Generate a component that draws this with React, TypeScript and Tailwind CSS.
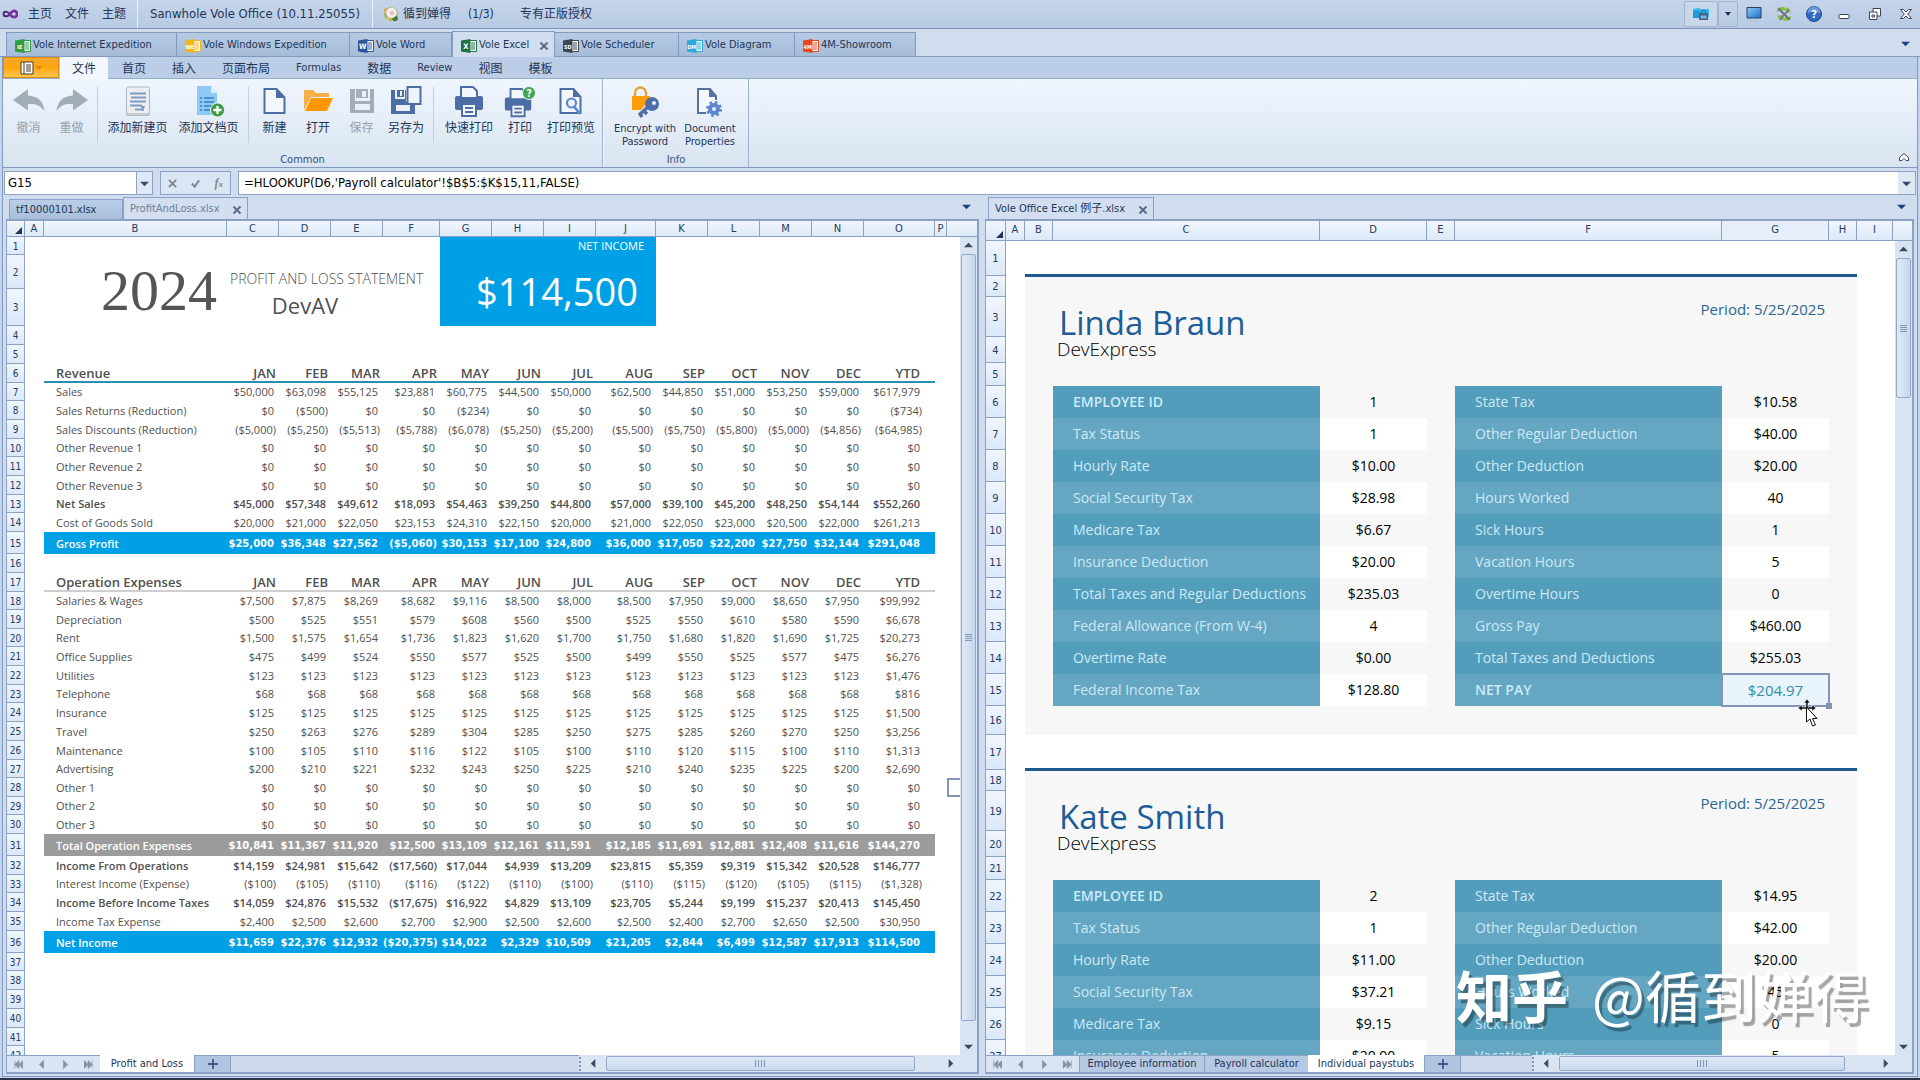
import { ReactNode } from 'react'
import clsx from 'clsx'

const UI_FONT = "font-['DejaVu_Sans_Condensed','DejaVu_Sans','Noto_Sans_CJK_SC',sans-serif]"
const CELL_FONT = "font-['Open_Sans','Noto_Sans_CJK_SC',sans-serif]"

const HEAD_BG = 'bg-linear-to-b from-[#f0f6fd] to-[#dbe8f8]'
const THUMB_V = 'bg-linear-to-r from-[#e0eaf6] to-[#c5d7ec]'
const THUMB_H = 'bg-linear-to-b from-[#dfe9f6] to-[#c8d9ed]'

const APP_TABS = [
  { name: 'Vole Internet Expedition', mark: 'IE', color: '#2f9e44', width: 'w-[171px]' },
  { name: 'Vole Windows Expedition', mark: 'WE', color: '#f2b31b', width: 'w-[173px]' },
  { name: 'Vole Word', mark: 'W', color: '#2b579a', width: 'w-[102px]' },
  { name: 'Vole Excel', mark: 'X', color: '#1f7244', width: 'w-[103px]', active: true },
  { name: 'Vole Scheduler', mark: 'SD', color: '#3b4654', width: 'w-[124px]' },
  { name: 'Vole Diagram', mark: 'DM', color: '#2aa9dc', width: 'w-[116px]' },
  { name: '4M-Showroom', mark: '4M', color: '#e8481f', width: 'w-[121px]' },
]

const RIBBON_TABS = ['首页', '插入', '页面布局', 'Formulas', '数据', 'Review', '视图', '模板']

type Kind = 'head' | 'line' | 'normal' | 'bold' | 'blue' | 'gray'
type PnlRow = [Kind, string, string]

const MONTHS = 'JAN FEB MAR APR MAY JUN JUL AUG SEP OCT NOV DEC YTD'
const ZEROS = '$0 $0 $0 $0 $0 $0 $0 $0 $0 $0 $0 $0 $0'

// rows 6..36 of the P&L sheet, null = empty row
const PNL: (PnlRow | null)[] = [
  ['head', 'Revenue', MONTHS],
  ['normal', 'Sales', '$50,000 $63,098 $55,125 $23,881 $60,775 $44,500 $50,000 $62,500 $44,850 $51,000 $53,250 $59,000 $617,979'],
  ['normal', 'Sales Returns (Reduction)', '$0 ($500) $0 $0 ($234) $0 $0 $0 $0 $0 $0 $0 ($734)'],
  ['normal', 'Sales Discounts (Reduction)', '($5,000) ($5,250) ($5,513) ($5,788) ($6,078) ($5,250) ($5,200) ($5,500) ($5,750) ($5,800) ($5,000) ($4,856) ($64,985)'],
  ['normal', 'Other Revenue 1', ZEROS],
  ['normal', 'Other Revenue 2', ZEROS],
  ['normal', 'Other Revenue 3', ZEROS],
  ['bold', 'Net Sales', '$45,000 $57,348 $49,612 $18,093 $54,463 $39,250 $44,800 $57,000 $39,100 $45,200 $48,250 $54,144 $552,260'],
  ['normal', 'Cost of Goods Sold', '$20,000 $21,000 $22,050 $23,153 $24,310 $22,150 $20,000 $21,000 $22,050 $23,000 $20,500 $22,000 $261,213'],
  ['blue', 'Gross Profit', '$25,000 $36,348 $27,562 ($5,060) $30,153 $17,100 $24,800 $36,000 $17,050 $22,200 $27,750 $32,144 $291,048'],
  null,
  ['line', 'Operation Expenses', MONTHS],
  ['normal', 'Salaries & Wages', '$7,500 $7,875 $8,269 $8,682 $9,116 $8,500 $8,000 $8,500 $7,950 $9,000 $8,650 $7,950 $99,992'],
  ['normal', 'Depreciation', '$500 $525 $551 $579 $608 $560 $500 $525 $550 $610 $580 $590 $6,678'],
  ['normal', 'Rent', '$1,500 $1,575 $1,654 $1,736 $1,823 $1,620 $1,700 $1,750 $1,680 $1,820 $1,690 $1,725 $20,273'],
  ['normal', 'Office Supplies', '$475 $499 $524 $550 $577 $525 $500 $499 $550 $525 $577 $475 $6,276'],
  ['normal', 'Utilities', '$123 $123 $123 $123 $123 $123 $123 $123 $123 $123 $123 $123 $1,476'],
  ['normal', 'Telephone', '$68 $68 $68 $68 $68 $68 $68 $68 $68 $68 $68 $68 $816'],
  ['normal', 'Insurance', '$125 $125 $125 $125 $125 $125 $125 $125 $125 $125 $125 $125 $1,500'],
  ['normal', 'Travel', '$250 $263 $276 $289 $304 $285 $250 $275 $285 $260 $270 $250 $3,256'],
  ['normal', 'Maintenance', '$100 $105 $110 $116 $122 $105 $100 $110 $120 $115 $100 $110 $1,313'],
  ['normal', 'Advertising', '$200 $210 $221 $232 $243 $250 $225 $210 $240 $235 $225 $200 $2,690'],
  ['normal', 'Other 1', ZEROS],
  ['normal', 'Other 2', ZEROS],
  ['normal', 'Other 3', ZEROS],
  ['gray', 'Total Operation Expenses', '$10,841 $11,367 $11,920 $12,500 $13,109 $12,161 $11,591 $12,185 $11,691 $12,881 $12,408 $11,616 $144,270'],
  ['bold', 'Income From Operations', '$14,159 $24,981 $15,642 ($17,560) $17,044 $4,939 $13,209 $23,815 $5,359 $9,319 $15,342 $20,528 $146,777'],
  ['normal', 'Interest Income (Expense)', '($100) ($105) ($110) ($116) ($122) ($110) ($100) ($110) ($115) ($120) ($105) ($115) ($1,328)'],
  ['bold', 'Income Before Income Taxes', '$14,059 $24,876 $15,532 ($17,675) $16,922 $4,829 $13,109 $23,705 $5,244 $9,199 $15,237 $20,413 $145,450'],
  ['normal', 'Income Tax Expense', '$2,400 $2,500 $2,600 $2,700 $2,900 $2,500 $2,600 $2,500 $2,400 $2,700 $2,650 $2,500 $30,950'],
  ['blue', 'Net Income', '$11,659 $22,376 $12,932 ($20,375) $14,022 $2,329 $10,509 $21,205 $2,844 $6,499 $12,587 $17,913 $114,500'],
]

const PNL_COLS = [19, 183, 52, 52, 52, 57, 52, 52, 52, 60, 52, 52, 52, 52, 71, 12]
const PNL_HEIGHTS = [
  18, 34, 37, 19, 19, 19, 18, 19, 19, 18, 19, 19, 18, 19, 22, 19, 19, 18, 19, 18, 19,
  19, 18, 19, 19, 19, 18, 19, 18, 19, 22, 19, 18, 19, 19, 22, 18, 19, 19, 19, 18, 19,
]

const PAY_COLS = [19, 28, 267, 107, 28, 267, 107, 28, 36]

type Stub = { name: string; left: [string, string][]; right: [string, string][] }

const LINDA: Stub = {
  name: 'Linda Braun',
  left: [
    ['EMPLOYEE ID', '1'], ['Tax Status', '1'], ['Hourly Rate', '$10.00'], ['Social Security Tax', '$28.98'], ['Medicare Tax', '$6.67'],
    ['Insurance Deduction', '$20.00'], ['Total Taxes and Regular Deductions', '$235.03'], ['Federal Allowance (From W-4)', '4'],
    ['Overtime Rate', '$0.00'], ['Federal Income Tax', '$128.80'],
  ],
  right: [
    ['State Tax', '$10.58'], ['Other Regular Deduction', '$40.00'], ['Other Deduction', '$20.00'], ['Hours Worked', '40'], ['Sick Hours', '1'],
    ['Vacation Hours', '5'], ['Overtime Hours', '0'], ['Gross Pay', '$460.00'], ['Total Taxes and Deductions', '$255.03'], ['NET PAY', '$204.97'],
  ],
}
const KATE: Stub = {
  name: 'Kate Smith',
  left: [
    ['EMPLOYEE ID', '2'], ['Tax Status', '1'], ['Hourly Rate', '$11.00'], ['Social Security Tax', '$37.21'], ['Medicare Tax', '$9.15'],
    ['Insurance Deduction', '$20.00'],
  ],
  right: [
    ['State Tax', '$14.95'], ['Other Regular Deduction', '$42.00'], ['Other Deduction', '$20.00'], ['Hours Worked', '45'], ['Sick Hours', '0'],
    ['Vacation Hours', '5'],
  ],
}

function Arrow({ dir, className = 'fill-[#3c4a68]' }: { dir: 'up' | 'down' | 'left' | 'right'; className?: string }) {
  const d = { up: 'M0 7 5 2l5 5z', down: 'M0 3h10L5 8z', left: 'M7 0v10L2 5z', right: 'M3 0v10l5-5z' }[dir]
  return <svg viewBox="0 0 10 10" className={clsx('size-[9px] shrink-0', className)}><path d={d} /></svg>
}

function Cross() {
  return (
    <svg viewBox="0 0 8 8" className="size-2" stroke="#5b6b8c" strokeWidth="2">
      <path d="M0.5 0.5l7 7M7.5 0.5l-7 7" />
    </svg>
  )
}

/* ---------- title bar ---------- */

function TitleBar() {
  return (
    <header className="flex h-[29px] shrink-0 items-center border-b border-[#7d93b8] bg-linear-to-b from-[#c4d4ea] to-[#b8cbe4] text-xs text-[#1e3557]">
      <svg viewBox="0 0 18 12" className="ml-0.5 h-3 w-4" fill="none">
        <path d="M9 6C7 4 5.500 3.500 4.300 3.500a2.500 2.500 0 0 0 0 5C6 8.500 8 7.500 9.500 5.500" stroke="#4b2a7b" strokeWidth="2.200" />
        <path d="M8 7.500c2-3 3.500-5 5.500-5a3.500 3.500 0 0 1 0 7C11.500 9.500 10 8 9 6" stroke="#7d2f9c" strokeWidth="3" />
      </svg>
      <nav className="flex w-[119px] gap-[13px] pl-2.5">
        <button>主页</button>
        <button>文件</button>
        <button>主题</button>
      </nav>
      <div className="h-full w-px bg-[#eaf1fa]" />
      <h1 className="w-[234px] pl-3 text-[13px]">Sanwhole Vole Office (10.11.25055)</h1>
      <div className="h-full w-px bg-[#eaf1fa]" />
      <svg viewBox="0 0 16 16" className="ml-2.5 size-4">
        <circle cx="8" cy="8" r="7" fill="#a5b36f" />
        <circle cx="3.500" cy="5" r="2.800" fill="#c9b26a" />
        <circle cx="12" cy="12.500" r="2.800" fill="#4e7a33" />
        <circle cx="8.500" cy="6.800" r="5.200" fill="#f8f1ee" />
        <circle cx="9" cy="7" r="2.400" fill="#eebfc6" />
        <circle cx="5" cy="13" r="1.600" fill="#e8d24a" />
      </svg>
      <span className="ml-1 w-[65px]">循到婵得</span>
      <span className="w-[52px]">(1/3)</span>
      <span>专有正版授权</span>

      <div className="ml-auto flex h-full items-center">
        <button className="grid h-[26px] w-[34px] place-items-center rounded-xs border border-[#a3b4ce] bg-[#c9d7ea]">
          <svg viewBox="0 0 18 14" className="h-3.5 w-[18px]">
            <path d="M1 2l6-1 1 1h9v8H1z" fill="#35b3ea" />
            <path d="M1 4h7v7H1z" fill="#1e9ad8" />
            <path d="M7 6h9v7H7z" fill="#44617e" />
            <path d="M8.500 8.500h6v3h-6z" fill="#7fb6dd" />
            <path d="M9.500 6V4h4v2" fill="none" stroke="#44617e" />
          </svg>
        </button>
        <button className="grid h-[26px] w-5 place-items-center rounded-xs border border-[#a3b4ce]">
          <svg viewBox="0 0 6 4" className="h-1 w-1.5"><path d="M0 0h6L3 4z" fill="#1e3557" /></svg>
        </button>
        <button className="ml-2">
          <svg viewBox="0 0 16 16" className="size-4">
            <defs>
              <linearGradient id="screen" x1="0" y1="0" x2="1" y2="1">
                <stop offset="0" stopColor="#8cc8f5" />
                <stop offset="1" stopColor="#1c6fcb" />
              </linearGradient>
            </defs>
            <path d="M1 1.500h14v10.500H1z" fill="url(#screen)" stroke="#27415f" />
            <path d="M4 15q4-2.500 8 0z" fill="#e9eef4" stroke="#9aa9bd" strokeWidth=".5" />
          </svg>
        </button>
        <button className="ml-3.5">
          <svg viewBox="0 0 16 16" className="size-4">
            <path d="M1 3q5-3.500 9-.5L12 1l3 5.500-6 .5 1.500-2Q6 3 1 6zM15 13q-5 3.500-9 .5L4 15 1 9.500 7 9l-1.500 2Q10 13 15 10z" fill="#86c440" />
            <path d="M2.500 2.500l11 11" stroke="#6a7482" strokeWidth="2.200" />
            <path d="M13 3.500L4 13.500" stroke="#7d6b8d" strokeWidth="1.800" />
          </svg>
        </button>
        <button className="ml-3.5">
          <svg viewBox="0 0 16 16" className="size-4">
            <circle cx="8" cy="8" r="7.500" fill="#2f69c2" stroke="#1c468e" />
            <path d="M1.500 7a6.500 6.500 0 0 1 13 0q-6.500-2-13 0" fill="#6c9ade" />
            <text x="8" y="12" textAnchor="middle" fontSize="11" fontWeight="bold" fill="#fff">?</text>
          </svg>
        </button>
        <button className="ml-4">
          <svg viewBox="0 0 12 12" className="size-3"><rect x="1" y="6.500" width="10" height="4" rx="1" fill="#fff" stroke="#3a4459" /></svg>
        </button>
        <button className="ml-[19px]">
          <svg viewBox="0 0 12 12" className="size-3" fill="#fff" stroke="#3a4459">
            <path d="M4 .5h7.500V8H4z" />
            <path d="M.5 4H8v7.500H.5z" />
            <path d="M3 7h2.500v2H3z" />
          </svg>
        </button>
        <button className="mr-2 ml-[19px]">
          <svg viewBox="0 0 12 12" className="size-3" fill="#fff" stroke="#3a4459">
            <path d="M.5 1.500h3L6 4l2.500-2.500h3L7.700 6l3.800 4.500h-3L6 8l-2.500 2.500h-3L4.300 6z" />
          </svg>
        </button>
      </div>
    </header>
  )
}

function AppIcon({ mark, color }: { mark: string; color: string }) {
  return (
    <svg viewBox="0 0 16 14" className="h-3.5 w-4 shrink-0">
      <path d="M8 1.500h7.500v11H8z" fill="#fff" stroke={color} />
      <path d="M10 4h4M10 6h4M10 8h4M10 10h4" stroke={color} />
      <path d="M0 1.500L9.500 0v14L0 12.500z" fill={color} />
      <text x="4.800" y="9.500" textAnchor="middle" fontSize={mark.length > 1 ? 5.5 : 7.5} fontWeight="bold" fill="#fff">{mark}</text>
    </svg>
  )
}

function AppTabs() {
  return (
    <div className="flex h-7 shrink-0 items-end border-b border-[#8399bd] bg-[#d0ddef] pl-1.5">
      {APP_TABS.map(tab => (
        <button
          key={tab.name}
          className={clsx(
            'flex items-center gap-0.5 border border-b-0 border-[#8399bd] pt-0.5 pl-2 text-[11px] text-[#1e3557]',
            tab.width,
            tab.active ? '-mb-px h-[26px] bg-[#d0ddef]' : 'h-6 border-l-0 bg-linear-to-b from-[#b7cbe4] to-[#a5bcd8] first:border-l',
          )}
        >
          <AppIcon mark={tab.mark} color={tab.color} />
          <span className="whitespace-nowrap">{tab.name}</span>
          {tab.active && <span className="mr-1.5 ml-auto"><Cross /></span>}
        </button>
      ))}
      <button className="mr-2.5 mb-2 ml-auto"><Arrow dir="down" className="fill-[#1f3f86]" /></button>
    </div>
  )
}

/* ---------- ribbon ---------- */

function Icon({ children }: { children: ReactNode }) {
  return <svg viewBox="0 0 32 32" className="size-8" fill="none">{children}</svg>
}

const UndoIcon = () => <Icon><path d="M0 14L15 3v6.500c9 .5 15.500 5 16.500 15.500C27 18.500 22 17.500 15 18v6.500z" fill="#a3adb9" /></Icon>
const RedoIcon = () => <Icon><path d="M32 14L17 3v6.500C8 10 1.500 14.500.5 25 5 18.500 10 17.500 17 18v6.500z" fill="#a3adb9" /></Icon>
const NewPageIcon = () => (
  <Icon>
    <rect x="4.500" y="1" width="23" height="28.500" rx="1.500" fill="#eceef2" stroke="#b3b8c0" />
    <path d="M5 27h22v2H5z" fill="#c9cdd4" />
    <path d="M8 7.500h16M9 11.500h15M8 15.500h16M8 19.500h12M13 23.500h8" stroke="#7c9cc4" strokeWidth="2" />
    <path d="M19 21h4M21 20v5" stroke="#4f74a8" />
  </Icon>
)
const NewDocIcon = () => (
  <Icon>
    <path d="M4 0h14l6 7v22H4z" fill="#8ec8f4" />
    <path d="M18 0v7h6z" fill="#d9eefc" />
    <path d="M7 12h2M11 12h10M7 16h2M11 16h10M7 20h2M11 20h8M7 24h2M11 24h6" stroke="#2f80c9" strokeWidth="1.500" />
    <circle cx="24.500" cy="24" r="7" fill="#3d9a45" stroke="#e6f2e6" />
    <path d="M24.500 20v8M20.500 24h8" stroke="#fff" strokeWidth="2.400" />
  </Icon>
)
const NewIcon = () => <Icon><path d="M5.500 3h12l8 8.500V27h-20z" fill="#f4f8fd" stroke="#4c6da5" strokeWidth="2" /><path d="M17 3v9h8.500z" fill="#4c6da5" /></Icon>
const OpenIcon = () => <Icon><path d="M2 4h9l3 3h13v4H9L2 24z" fill="#f6b04a" /><path d="M9 12h22l-6 13H3z" fill="#ff9800" /></Icon>
const SaveIcon = () => (
  <Icon>
    <path d="M4 3h5v12h15V3h4v24H4z" fill="#a3adb9" />
    <path d="M10 3h12v9H10z" fill="#a3adb9" />
    <path d="M16 5h4v6h-4z" fill="#e9f0f8" />
    <path d="M9 18h15v6H9z" fill="#e9f0f8" />
  </Icon>
)
const SaveAsIcon = () => (
  <Icon>
    <path d="M1 4h4v9h10V4h1v12h9v12H1z" fill="#4c6da5" />
    <path d="M7 4h7v7H7z" fill="#4c6da5" />
    <path d="M10 5h2v5h-2z" fill="#e9f0f8" />
    <path d="M6 19h14v6H6z" fill="#e9f0f8" />
    <path d="M17.500 1h13v17h-13z" fill="#eef4fc" stroke="#4c6da5" strokeWidth="2" />
  </Icon>
)
const Printer = () => (
  <>
    <path d="M4 10h24q2 0 2 2v10q0 2-2 2H4q-2 0-2-2V12q0-2 2-2z" fill="#4c6da5" />
    <path d="M8 12V1h12l4 4v7z" fill="#f4f8fd" stroke="#4c6da5" strokeWidth="2" />
    <path d="M9 18h14v12H9z" fill="#f4f8fd" stroke="#4c6da5" strokeWidth="2" />
    <path d="M12 22h8M12 26h8" stroke="#4c6da5" strokeWidth="2" />
  </>
)
const QuickPrintIcon = () => <Icon><Printer /></Icon>
const PrintIcon = () => (
  <Icon>
    <g transform="translate(-1 2) scale(.94)"><Printer /></g>
    <circle cx="25" cy="7" r="6.500" fill="#3fa652" stroke="#eef5fc" />
    <text x="25" y="11" textAnchor="middle" fontSize="11" fontWeight="bold" fill="#fff">?</text>
  </Icon>
)
const PreviewIcon = () => (
  <Icon>
    <path d="M25.500 27h-20V3h13l7 8z" fill="#f4f8fd" stroke="#4c6da5" strokeWidth="2" />
    <path d="M18 3v8h7z" fill="#4c6da5" />
    <circle cx="16.500" cy="17" r="4.500" fill="#eef4fc" stroke="#5d87d0" strokeWidth="2.200" />
    <path d="M19.500 21l5.500 7" stroke="#5d87d0" strokeWidth="2.800" />
  </Icon>
)
const EncryptIcon = () => (
  <Icon>
    <path d="M6 12V7a5.500 5.500 0 0 1 11 0v5" stroke="#e0a43c" strokeWidth="2.400" />
    <path d="M3 10h18v3l-9 11H3z" fill="#ff9d0a" />
    <circle cx="23" cy="18" r="7" fill="#4f6ea8" />
    <circle cx="25" cy="17" r="2" fill="#eaf1fa" />
    <path d="M19 21l-9 8M11 28l2 3M15 25l3 3" stroke="#4f6ea8" strokeWidth="3.500" />
  </Icon>
)
const PropsIcon = () => (
  <Icon>
    <path d="M12 27H4V3h12l6 7v4" fill="#f4f8fd" stroke="#57719c" strokeWidth="2" />
    <path d="M15 3v8h7z" fill="#57719c" />
    <circle cx="20" cy="23" r="6.500" stroke="#5d87d0" strokeWidth="3" strokeDasharray="2.550 2.550" />
    <circle cx="20" cy="23" r="4" stroke="#5d87d0" strokeWidth="4" />
  </Icon>
)

function RibbonButton({ icon, label, width, disabled }: { icon: ReactNode; label: string; width: string; disabled?: boolean }) {
  return (
    <button
      disabled={disabled}
      className={clsx('flex flex-col items-center gap-1 pt-[7px]', width, disabled ? 'text-[#97a1ae]' : 'text-[#1e3557]')}
    >
      {icon}
      <span className="text-center leading-[13px] whitespace-pre-line">{label}</span>
    </button>
  )
}

const Divider = () => <div className="mx-1 mt-2 h-14 w-px bg-[#c3cfdf]" />

function Ribbon() {
  return (
    <>
      <div className="flex h-[22px] shrink-0 items-end border-b border-[#94aed0] bg-[#bccee7] text-xs text-[#1e3557]">
        <button className="flex h-full w-14 items-center justify-center gap-0.5 border border-[#d98c10] bg-linear-to-b from-[#f7a928] via-[#ffa406] to-[#ffc74a]">
          <svg viewBox="0 0 14 14" className="size-3.5" stroke="#4a3a1e" fill="#fff">
            <path d="M1 1h12v12H1zM4 1v12M6 4h5M6 6h5M6 8h5M6 10h5" />
          </svg>
          <svg viewBox="0 0 6 4" className="h-1 w-1.5"><path d="M0 0h6L3 4z" fill="#d08a1e" /></svg>
        </button>
        <button className="-mb-px ml-px h-[22px] w-12 rounded-t-xs bg-[#f2f7fd] pt-0.5">文件</button>
        <div className="ml-px flex h-full pt-0.5">
          {RIBBON_TABS.map(t => (
            <button key={t} className={clsx('px-[13px]', /[A-Z]/.test(t) && 'text-[11px]')}>{t}</button>
          ))}
        </div>
      </div>
      <section className="flex h-[89px] shrink-0 border-b border-[#8399bd] bg-linear-to-b from-[#f0f6fe] to-[#d8e4f1] text-[#33507e]">
        <div className="flex flex-col border-r border-[#9fb2cd]">
          <div className="flex flex-1 items-start pl-1 text-xs">
            <RibbonButton icon={<UndoIcon />} label="撤消" width="w-[43px]" disabled />
            <RibbonButton icon={<RedoIcon />} label="重做" width="w-[43px]" disabled />
            <Divider />
            <RibbonButton icon={<NewPageIcon />} label="添加新建页" width="w-[71px]" />
            <RibbonButton icon={<NewDocIcon />} label="添加文档页" width="w-[71px]" />
            <Divider />
            <RibbonButton icon={<NewIcon />} label="新建" width="w-[43px]" />
            <RibbonButton icon={<OpenIcon />} label="打开" width="w-11" />
            <RibbonButton icon={<SaveIcon />} label="保存" width="w-[43px]" disabled />
            <RibbonButton icon={<SaveAsIcon />} label="另存为" width="w-[46px]" />
            <Divider />
            <RibbonButton icon={<QuickPrintIcon />} label="快速打印" width="w-[62px]" />
            <RibbonButton icon={<PrintIcon />} label="打印" width="w-10" />
            <RibbonButton icon={<PreviewIcon />} label="打印预览" width="w-[62px]" />
          </div>
          <span className="text-center text-[11px] leading-3.5">Common</span>
        </div>
        <div className="flex flex-col border-r border-l border-r-[#9fb2cd] border-l-[#f4f8fd] px-[7px] text-[11px]">
          <div className="flex flex-1 items-start">
            <RibbonButton icon={<EncryptIcon />} label={'Encrypt with\nPassword'} width="w-[68px]" />
            <RibbonButton icon={<PropsIcon />} label={'Document\nProperties'} width="w-[62px]" />
          </div>
          <span className="text-center leading-3.5">Info</span>
        </div>
        <button className="mr-2 mb-1.5 ml-auto self-end">
          <svg viewBox="0 0 10 8" className="h-2 w-2.5" fill="#fff" stroke="#3a4459"><path d="M.5 4.500L5 .5l4.500 4v3H7L5 5.500l-2 2H.5z" /></svg>
        </button>
      </section>
    </>
  )
}

function FormulaBar() {
  return (
    <div className="flex h-[30px] shrink-0 bg-[#d0ddef] px-px pt-[3px] pb-[3px]">
      <div className="flex w-[149px] border border-[#8ba2c6] bg-white">
        <input aria-label="Name Box" defaultValue="G15" className="min-w-0 flex-1 pl-[3px] text-[13px] text-black" />
        <button className="grid w-4 place-items-center border-l border-[#8ba2c6] bg-[#dfe9f6]"><Arrow dir="down" /></button>
      </div>
      <div className="mx-[7px] flex w-[71px] items-center justify-around border border-[#8ba2c6] bg-[#dbe6f4]">
        <button aria-label="Cancel"><svg viewBox="0 0 10 10" className="size-[9px]" stroke="#7f8792" strokeWidth="2.200"><path d="M1 1l8 8M9 1L1 9" /></svg></button>
        <button aria-label="Enter"><svg viewBox="0 0 10 10" className="size-[9px]" stroke="#7f8792" strokeWidth="2.200" fill="none"><path d="M1 5l3 3.500 5-7" /></svg></button>
        <button aria-label="Insert Function" className="font-['Liberation_Serif',serif] text-xs leading-4 font-bold text-[#7f8792] italic">f<span className="text-[9px]">x</span></button>
      </div>
      <div className="flex flex-1 border border-[#8ba2c6] bg-white">
        <input
          aria-label="Formula"
          defaultValue="=HLOOKUP(D6,'Payroll calculator'!$B$5:$K$15,11,FALSE)"
          className="min-w-0 flex-1 pl-[5px] text-[13px] text-black"
        />
        <button className="grid w-[17px] place-items-center bg-[#dfe9f6]"><Arrow dir="down" /></button>
      </div>
    </div>
  )
}

/* ---------- panes ---------- */

function DocTabs({ tabs }: { tabs: { name: string; width: string; active?: boolean; dim?: boolean }[] }) {
  return (
    <div className="flex h-[21px] items-end pl-[3px]">
      {tabs.map(t => (
        <button
          key={t.name}
          className={clsx(
            'flex items-center justify-between border border-b-0 border-[#8ba2c6] px-1.5 pt-px text-[11px] whitespace-nowrap',
            t.width,
            t.dim ? 'text-[#6e7d95]' : 'text-[#1e3557]',
            t.active ? '-mb-px h-[23px] bg-[#d3dff0]' : 'h-5 bg-linear-to-b from-[#b9cde6] to-[#a8bfdb]',
          )}
        >
          {t.name}
          {t.active && <Cross />}
        </button>
      ))}
      <button className="mr-2 mb-2 ml-auto"><Arrow dir="down" className="fill-[#1f3f86]" /></button>
    </div>
  )
}

function VScroll({ thumb }: { thumb: string }) {
  return (
    <div className="flex w-[17px] shrink-0 flex-col items-center bg-[#d9e4f2]">
      <button className="grid h-[17px] place-items-center"><Arrow dir="up" /></button>
      <div className="flex w-full flex-1 flex-col px-px">
        <div className={clsx('grid place-items-center rounded-xs border border-[#93a9ca]', THUMB_V, thumb)}>
          <div className="flex flex-col gap-px">
            {[0, 1, 2, 3].map(i => <div key={i} className="h-px w-[7px] bg-[#8198bd]" />)}
          </div>
        </div>
      </div>
      <button className="grid h-[18px] place-items-center"><Arrow dir="down" /></button>
    </div>
  )
}

function SheetBar({ tabs, scroll, thumb }: { tabs: { name: string; width: string; active?: boolean }[]; scroll: string; thumb: string }) {
  const navs = ['M1 0v10M6 0v10L1 5zM11 0v10L6 5z', 'M8 0v10L3 5z', 'M3 0v10l5-5z', 'M10 0v10M5 0v10l5-5zM0 0v10l5-5z']
  return (
    <div className="flex h-[17px] shrink-0 bg-[#cddaee] text-[11px] leading-4 text-[#1e3557]">
      <div className="flex w-[93px] shrink-0 items-center justify-around border-t border-[#8ba2c6] bg-[#d9e5f5]">
        {navs.map(d => (
          <button key={d}><svg viewBox="0 0 11 10" className="size-[9px]" fill="#8790a0" stroke="#8790a0" strokeWidth=".8"><path d={d} /></svg></button>
        ))}
      </div>
      {tabs.map(t => (
        <button key={t.name} className={clsx('shrink-0 border-t whitespace-nowrap', t.width, t.active ? 'border-white bg-white' : 'border-l border-[#8ba2c6] bg-[#b5c9e3]')}>
          {t.name}
        </button>
      ))}
      <button aria-label="New sheet" className="grid w-[37px] shrink-0 place-items-center border border-b-0 border-[#8ba2c6] bg-[#b0c5e0]">
        <svg viewBox="0 0 10 10" className="size-2.5" stroke="#43598a" strokeWidth="1.800"><path d="M5 0v10M0 5h10" /></svg>
      </button>
      <div className="flex-1 border-t border-[#8ba2c6]" />
      <div className={clsx('flex shrink-0 items-center gap-2 bg-[#d9e5f3] pr-[22px]', scroll)}>
        <div className="h-3.5 border-l-2 border-dotted border-[#7f93b5]" />
        <Arrow dir="left" />
        <div className="flex h-full flex-1 py-px">
          <div className={clsx('flex items-center justify-center gap-0.5 rounded-xs border border-[#93a9ca]', THUMB_H, thumb)}>
            {[0, 1, 2, 3].map(i => <div key={i} className="h-[7px] w-px bg-[#8198bd]" />)}
          </div>
        </div>
        <Arrow dir="right" />
      </div>
    </div>
  )
}

function ColumnHeads({ cols, corner, height, selected }: { cols: number[]; corner: number; height: string; selected?: string }) {
  const line = 'shrink-0 border-r border-b border-[#8ba2c6]'
  return (
    <div className={clsx('flex overflow-hidden text-[11px] text-[#253c63]', HEAD_BG, height)}>
      <div style={{ width: corner }} className={clsx('flex items-end justify-end p-0.5', line)}>
        <svg viewBox="0 0 6 6" className="size-[7px]"><path d="M6 0v6H0z" fill="#1e3557" /></svg>
      </div>
      {cols.map((w, i) => {
        const letter = String.fromCharCode(65 + i)
        return (
          <div key={letter} style={{ width: w }} className={clsx('grid place-items-center', line, letter === selected && 'bg-[#e6eefb]')}>{letter}</div>
        )
      })}
      <div className="flex-1 border-b border-[#8ba2c6]" />
    </div>
  )
}

function Cols({ cols, corner }: { cols: number[]; corner: number }) {
  return (
    <colgroup>
      <col style={{ width: corner }} />
      {cols.map((w, i) => <col key={i} style={{ width: w }} />)}
      <col />
    </colgroup>
  )
}

function RowHead({ n, small }: { n: number; small?: boolean }) {
  return (
    <th className={clsx('border-r border-b border-[#8ba2c6] pt-0.5 leading-3 font-normal text-[#253c63]', UI_FONT, HEAD_BG, small ? 'text-[10px]' : 'text-[11px]')}>
      {n}
    </th>
  )
}

function valuePad(col: number, value: string, head: boolean) {
  const neg = value.startsWith('(')
  if (col === 12) return neg ? 'pr-[13px]' : 'pr-[15px]'
  return neg || head ? 'pr-[3px]' : 'pr-[5px]'
}

const KIND_CELL: Record<Kind, string> = {
  head: 'border-b-2 border-[#2b8fb1] text-[13px] font-semibold',
  line: 'border-b-2 border-[#cfcfcf] text-[13px] font-semibold',
  normal: '',
  bold: 'font-semibold',
  blue: 'bg-[#00a0e6] pt-0.5 text-white',
  gray: 'bg-[#9c9c9c] pt-0.5 text-white',
}

function PnlCells({ row }: { row: PnlRow }) {
  const [kind, label, values] = row
  const band = kind === 'blue' || kind === 'gray'
  return (
    <>
      <td />
      <td className={clsx('pl-3', KIND_CELL[kind], band && 'font-semibold')}>{label}</td>
      {values.split(' ').map((v, i) => (
        <td
          key={i}
          className={clsx('text-right', valuePad(i, v, kind === 'head' || kind === 'line'), KIND_CELL[kind], band && "font-['DejaVu_Sans',sans-serif] text-[10px] font-bold")}
        >
          {v}
        </td>
      ))}
      <td />
    </>
  )
}

function PnlSheet() {
  return (
    <table className={clsx('w-full table-fixed border-separate border-spacing-0 text-[11px] leading-4 text-[#505050]', CELL_FONT)}>
      <Cols cols={PNL_COLS} corner={18} />
      <tbody className="[&_td]:whitespace-nowrap">
        {PNL_HEIGHTS.map((h, i) => {
          const n = i + 1
          const row = PNL[n - 6]
          return (
            <tr key={n} style={{ height: h }}>
              <RowHead n={n} small />
              {n === 1 && (
                <>
                  <td colSpan={6} />
                  <td colSpan={4} className="bg-[#00a0e6] pr-3 text-right text-white">NET INCOME</td>
                </>
              )}
              {n === 2 && (
                <>
                  <td />
                  <td rowSpan={2} className="pr-2.5 text-right font-['Liberation_Serif',serif] text-[58px] leading-[60px] text-[#555]">2024</td>
                  <td colSpan={4} className="pl-[3px] align-bottom text-sm font-light">PROFIT AND LOSS STATEMENT</td>
                  <td colSpan={4} rowSpan={2} className="bg-[#00a0e6] pr-[18px] text-right text-[38px] leading-none text-white">$114,500</td>
                </>
              )}
              {n === 3 && (
                <>
                  <td />
                  <td colSpan={3} className="pb-1.5 text-center text-[22px] leading-7">DevAV</td>
                </>
              )}
              {row && <PnlCells row={row} />}
              {n === 28 && <td className="border-2 border-r-0 border-[#8496b8]" />}
            </tr>
          )
        })}
      </tbody>
    </table>
  )
}

function MoveCursor() {
  return (
    <svg viewBox="0 0 20 28" className="absolute top-[25px] left-[76px] z-10 h-7 w-5">
      <path d="M9 0l3 4h-2v4h4V6l4 3-4 3v-2H4v2L0 9l4-3v2h4V4H6z" fill="#111" stroke="#fff" strokeWidth=".5" />
      <path d="M8.500 8v15l3.500-3 2.500 7 3-1-3-6.500H19z" fill="#fff" stroke="#111" />
    </svg>
  )
}

const GREY = 'bg-[#f7f7f7]'

function StubRows({ start, stub, selected, tail }: { start: number; stub: Stub; selected?: boolean; tail?: boolean }) {
  const labelClass = (i: number) => clsx('pl-5 whitespace-nowrap text-[#cdeaf7]', i % 2 ? 'bg-[#65a6c2]' : 'bg-[#539dbc]')
  return (
    <>
      <tr className="h-[35px]"><RowHead n={start} /><td /><td colSpan={7} className="border-b-2 border-[#1f5a8c]" /></tr>
      <tr className="h-[21px]"><RowHead n={start + 1} /><td /><td colSpan={7} className={clsx('border-t border-[#1f5a8c]', GREY)} /></tr>
      <tr className="h-10">
        <RowHead n={start + 2} />
        <td />
        <td className={GREY} />
        <td colSpan={2} className={clsx('pt-3 pl-1.5 text-[33px] leading-7 text-[#1d5c96]', GREY)}>{stub.name}</td>
        <td className={GREY} />
        <td colSpan={2} className={clsx('pr-1 text-right align-top text-[15px] leading-6 text-[#2c6693]', GREY)}>Period: 5/25/2025</td>
        <td className={GREY} />
      </tr>
      <tr className="h-[26px]">
        <RowHead n={start + 3} />
        <td />
        <td className={GREY} />
        <td colSpan={6} className={clsx('pl-1 align-top text-[19px] leading-6 font-light', GREY)}>DevExpress</td>
      </tr>
      <tr className="h-[23px]"><RowHead n={start + 4} /><td /><td colSpan={7} className={GREY} /></tr>
      {stub.left.map(([label, value], i) => {
        const [label2, value2] = stub.right[i]
        const net = label2 === 'NET PAY'
        const valueBg = i % 2 ? 'bg-white' : GREY
        return (
          <tr key={label} className="h-8">
            <RowHead n={start + 5 + i} />
            <td />
            <td className={GREY} />
            <td className={clsx(labelClass(i), i === 0 && 'font-semibold')}>{label}</td>
            <td className={clsx('text-center', valueBg)}>{value}</td>
            <td className={GREY} />
            <td className={clsx(labelClass(i), net && 'font-semibold')}>{label2}</td>
            {net && selected ? (
              <td className="relative bg-[#e8f3fb] text-center text-[15px] text-[#2f8fa8] outline-2 -outline-offset-1 outline-[#8496b8]">
                {value2}
                <span className="absolute -right-[3px] -bottom-[3px] size-1.5 bg-[#7f93b5]" />
                <MoveCursor />
              </td>
            ) : (
              <td className={clsx('text-center', valueBg)}>{value2}</td>
            )}
            <td className={GREY} />
          </tr>
        )
      })}
      {tail && <tr className="h-[29px]"><RowHead n={start + 15} /><td /><td colSpan={7} className={GREY} /></tr>}
    </>
  )
}

function PaystubSheet() {
  return (
    <table className={clsx('w-full table-fixed border-separate border-spacing-0 text-sm leading-5 text-black', CELL_FONT)}>
      <Cols cols={PAY_COLS} corner={20} />
      <tbody>
        <StubRows start={1} stub={LINDA} selected tail />
        <StubRows start={17} stub={KATE} />
      </tbody>
    </table>
  )
}

function Pane({ tabs, heads, sheet, vscroll, bar }: { tabs: ReactNode; heads: ReactNode; sheet: ReactNode; vscroll: ReactNode; bar: ReactNode }) {
  return (
    <section className="flex min-h-0 min-w-0 flex-col">
      {tabs}
      <div className="flex min-h-0 flex-1 flex-col border-2 border-l border-[#8ba2c6] bg-white">
        {heads}
        <div className="flex min-h-0 flex-1">
          <div className="min-w-0 flex-1 overflow-hidden">{sheet}</div>
          {vscroll}
        </div>
        {bar}
      </div>
    </section>
  )
}

export default function App() {
  return (
    <div className={clsx('relative flex h-screen flex-col overflow-hidden bg-[#c3d5ee]', UI_FONT)}>
      <TitleBar />
      <AppTabs />
      <main className="mx-0.5 mb-px flex min-h-0 flex-1 flex-col border border-t-0 border-[#8399bd] bg-[#d0ddef]">
        <Ribbon />
        <FormulaBar />
        <div className="grid min-h-0 flex-1 grid-cols-[973fr_929fr] grid-rows-[minmax(0,1fr)] gap-1.5 px-[3px] pb-0.5">
          <Pane
            tabs={<DocTabs tabs={[{ name: 'tf10000101.xlsx', width: 'w-[114px]' }, { name: 'ProfitAndLoss.xlsx', width: 'w-[125px]', active: true, dim: true }]} />}
            heads={<ColumnHeads cols={PNL_COLS} corner={18} height="h-4" />}
            sheet={<PnlSheet />}
            vscroll={<VScroll thumb="h-[98%]" />}
            bar={<SheetBar tabs={[{ name: 'Profit and Loss', width: 'w-[94px]', active: true }]} scroll="w-[398px]" thumb="w-[93%]" />}
          />
          <Pane
            tabs={<DocTabs tabs={[{ name: 'Vole Office Excel 例子.xlsx', width: 'w-[166px]', active: true }]} />}
            heads={<ColumnHeads cols={PAY_COLS} corner={20} height="h-5" selected="G" />}
            sheet={<PaystubSheet />}
            vscroll={<VScroll thumb="h-[18%]" />}
            bar={
              <SheetBar
                tabs={[
                  { name: 'Employee information', width: 'w-[125px]' },
                  { name: 'Payroll calculator', width: 'w-[104px]' },
                  { name: 'Individual paystubs', width: 'w-[116px]', active: true },
                ]}
                scroll="w-[380px]"
                thumb="w-[91%]"
              />
            }
          />
        </div>
      </main>
      <div className="h-0.5 shrink-0 bg-[#2b3548]" />
      <p className="pointer-events-none absolute right-[51px] bottom-[52px] z-20 flex items-center gap-6 font-['Noto_Sans_CJK_SC',sans-serif] text-[56px] leading-[68px] text-white [text-shadow:3px_4px_1px_rgb(0_0_0/0.35)]">
        <span className="font-bold">知乎</span>
        <span>@循到婵得</span>
      </p>
    </div>
  )
}
